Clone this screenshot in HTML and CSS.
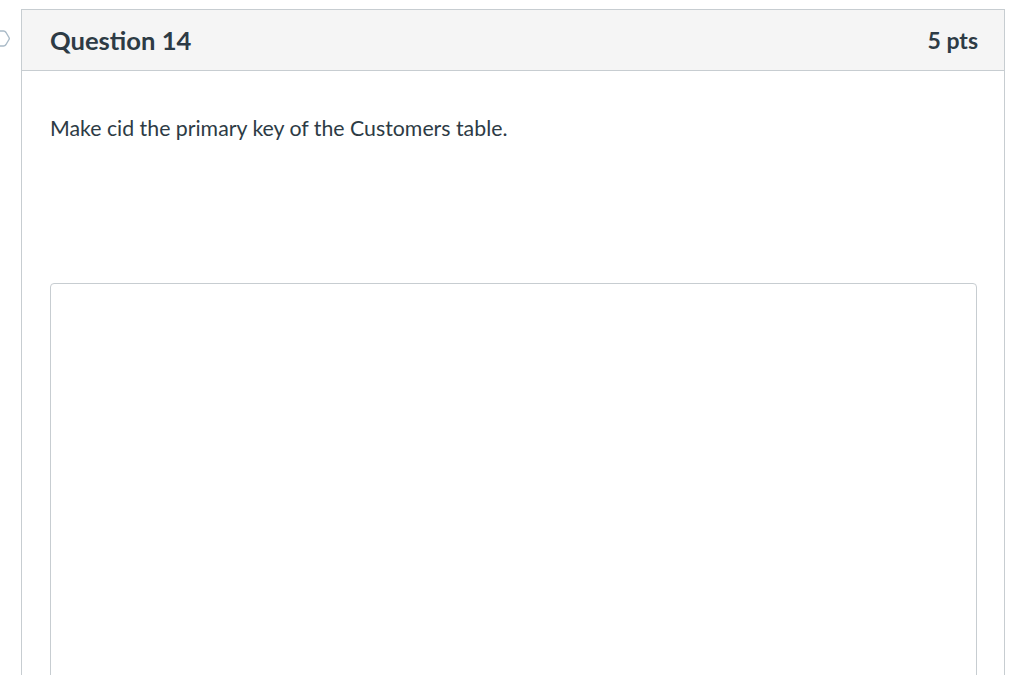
FILE: index.html
```html
<!DOCTYPE html>
<html>
<head>
<meta charset="utf-8">
<link rel="stylesheet" href="styles.css">
</head>
<body>
<div class="page">
  <svg class="flag" width="12" height="20" viewBox="0 0 12 20">
    <path d="M-1,2 L3.5,2 Q5,2 6,3.5 L9,8.5 Q9.6,9.5 9,10.5 L6,15.5 Q5,17 3.5,17 L-1,17" fill="none" stroke="#a9bac7" stroke-width="1.4" stroke-linejoin="round"/>
  </svg>
  <div class="question">
    <div class="header">
      <h2 class="title">Question 14</h2>
      <span class="pts">5 pts</span>
    </div>
    <div class="body">
      <p class="text">Make cid the primary key of the Customers table.</p>
      <div class="answer"></div>
    </div>
  </div>
</div>
</body>
</html>
```
FILE: styles.css
```css
html, body {
  margin: 0;
  padding: 0;
  background: #fff;
  overflow: hidden;
}
body {
  font-family: Lato, "Noto Sans", sans-serif;
  color: #2d3b45;
}
.page {
  position: relative;
  padding: 9px 19px 0 21px;
}
.flag {
  position: absolute;
  left: 0;
  top: 29px;
}
.question {
  border: 1px solid #c7cdd1;
  border-bottom: none;
  height: 700px;
}
.header {
  display: flex;
  justify-content: space-between;
  align-items: center;
  height: 60px;
  background: #f5f5f5;
  border-bottom: 1px solid #c7cdd1;
  padding: 0 26px 0 28px;
}
.title {
  margin: 0;
  font-size: 25.6px;
  font-weight: 700;
  color: #2d3b45;
}
.pts {
  font-size: 23px;
  font-weight: 700;
  color: #2d3b45;
}
.body {
  padding: 0 27px 0 28px;
}
.text {
  margin: 44px 0 0;
  font-size: 21.3px;
  line-height: 26px;
}
.answer {
  margin-top: 142px;
  height: 500px;
  border: 1px solid #c7cdd1;
  border-radius: 4px;
}
```
